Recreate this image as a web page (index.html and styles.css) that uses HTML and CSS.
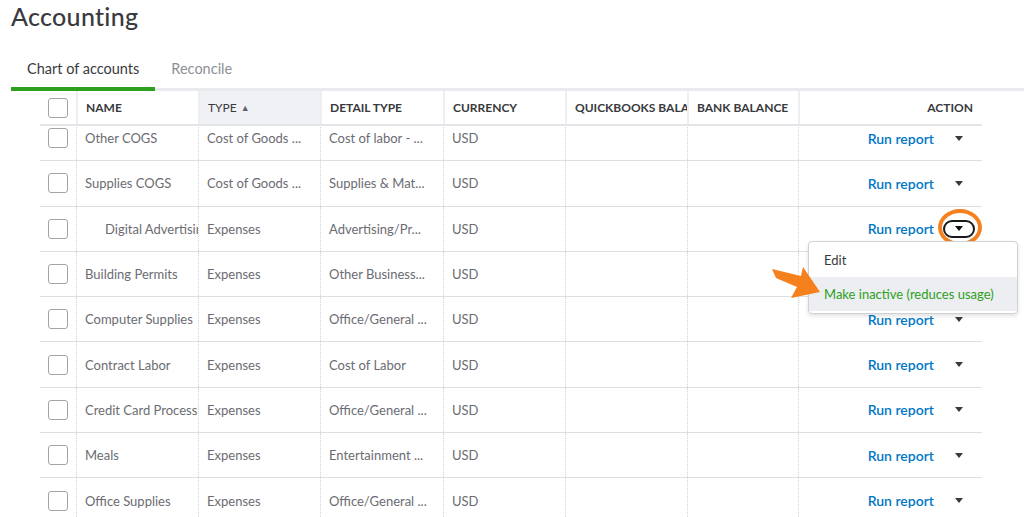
FILE: index.html
```html
<!DOCTYPE html>
<html lang="en">
<head>
    <meta charset="UTF-8">
    <title>Accounting</title>
    <link rel="stylesheet" href="styles.css">
</head>
<body>
    <h1 class="title">Accounting</h1>
    <div class="tabs">
        <div class="tab active">Chart of accounts</div>
        <div class="tab">Reconcile</div>
    </div>

    <div class="table">
        <div class="row head">
            <div class="cell check"><span class="box"></span></div>
            <div class="cell">NAME</div>
            <div class="cell sorted">TYPE <span class="sort">&#9650;</span></div>
            <div class="cell">DETAIL TYPE</div>
            <div class="cell">CURRENCY</div>
            <div class="cell">QUICKBOOKS BALANCE</div>
            <div class="cell">BANK BALANCE</div>
            <div class="cell action">ACTION</div>
        </div>

        <div class="body">
            <div class="body-inner">
                <div class="row">
                    <div class="cell check"><span class="box"></span></div>
                    <div class="cell">Other COGS</div>
                    <div class="cell">Cost of Goods ...</div>
                    <div class="cell">Cost of labor - ...</div>
                    <div class="cell">USD</div>
                    <div class="cell"></div>
                    <div class="cell"></div>
                    <div class="cell action"><a class="run">Run report</a><span class="drop"><span class="tri"></span></span></div>
                </div>
                <div class="row">
                    <div class="cell check"><span class="box"></span></div>
                    <div class="cell">Supplies COGS</div>
                    <div class="cell">Cost of Goods ...</div>
                    <div class="cell">Supplies &amp; Mat...</div>
                    <div class="cell">USD</div>
                    <div class="cell"></div>
                    <div class="cell"></div>
                    <div class="cell action"><a class="run">Run report</a><span class="drop"><span class="tri"></span></span></div>
                </div>
                <div class="row open">
                    <div class="cell check"><span class="box"></span></div>
                    <div class="cell sub">Digital Advertising</div>
                    <div class="cell">Expenses</div>
                    <div class="cell">Advertising/Pr...</div>
                    <div class="cell">USD</div>
                    <div class="cell"></div>
                    <div class="cell"></div>
                    <div class="cell action">
                        <a class="run">Run report</a><span class="drop focus"><span class="tri"></span></span>
                        <span class="ring"></span>
                        <svg class="pointer" width="56" height="40" viewBox="0 0 56 40">
                            <polygon points="5,8 34,15 36,6 53,31 24,37 30,26 9,17" fill="#f5801e"/>
                        </svg>
                        <div class="menu">
                            <div class="item">Edit</div>
                            <div class="item hover">Make inactive (reduces usage)</div>
                        </div>
                    </div>
                </div>
                <div class="row">
                    <div class="cell check"><span class="box"></span></div>
                    <div class="cell">Building Permits</div>
                    <div class="cell">Expenses</div>
                    <div class="cell">Other Business...</div>
                    <div class="cell">USD</div>
                    <div class="cell"></div>
                    <div class="cell"></div>
                    <div class="cell action"><a class="run">Run report</a><span class="drop"><span class="tri"></span></span></div>
                </div>
                <div class="row">
                    <div class="cell check"><span class="box"></span></div>
                    <div class="cell">Computer Supplies</div>
                    <div class="cell">Expenses</div>
                    <div class="cell">Office/General ...</div>
                    <div class="cell">USD</div>
                    <div class="cell"></div>
                    <div class="cell"></div>
                    <div class="cell action"><a class="run">Run report</a><span class="drop"><span class="tri"></span></span></div>
                </div>
                <div class="row">
                    <div class="cell check"><span class="box"></span></div>
                    <div class="cell">Contract Labor</div>
                    <div class="cell">Expenses</div>
                    <div class="cell">Cost of Labor</div>
                    <div class="cell">USD</div>
                    <div class="cell"></div>
                    <div class="cell"></div>
                    <div class="cell action"><a class="run">Run report</a><span class="drop"><span class="tri"></span></span></div>
                </div>
                <div class="row">
                    <div class="cell check"><span class="box"></span></div>
                    <div class="cell">Credit Card Processing</div>
                    <div class="cell">Expenses</div>
                    <div class="cell">Office/General ...</div>
                    <div class="cell">USD</div>
                    <div class="cell"></div>
                    <div class="cell"></div>
                    <div class="cell action"><a class="run">Run report</a><span class="drop"><span class="tri"></span></span></div>
                </div>
                <div class="row">
                    <div class="cell check"><span class="box"></span></div>
                    <div class="cell">Meals</div>
                    <div class="cell">Expenses</div>
                    <div class="cell">Entertainment ...</div>
                    <div class="cell">USD</div>
                    <div class="cell"></div>
                    <div class="cell"></div>
                    <div class="cell action"><a class="run">Run report</a><span class="drop"><span class="tri"></span></span></div>
                </div>
                <div class="row">
                    <div class="cell check"><span class="box"></span></div>
                    <div class="cell">Office Supplies</div>
                    <div class="cell">Expenses</div>
                    <div class="cell">Office/General ...</div>
                    <div class="cell">USD</div>
                    <div class="cell"></div>
                    <div class="cell"></div>
                    <div class="cell action"><a class="run">Run report</a><span class="drop"><span class="tri"></span></span></div>
                </div>
            </div>
        </div>
    </div>
</body>
</html>
```

FILE: styles.css
```css
body {
    margin: 0;
    font-family: Lato, "Open Sans", Arial, sans-serif;
    color: #393a3d;
    background: #fff;
    overflow: hidden;
    height: 517px;
}

.title {
    margin: 0;
    padding: 0 11px;
    font-size: 25px;
    font-weight: 500;
    line-height: 32px;
    letter-spacing: 0.3px;
}

.tabs {
    display: flex;
    margin: 20px 0 0 11px;
    border-bottom: 3px solid #e8eaed;
}

.tab {
    padding: 8px 16px 10px;
    font-size: 14.5px;
    color: #8d9096;
    margin-bottom: -3px;
    border-bottom: 4px solid transparent;
}

.tab.active {
    color: #393a3d;
    border-bottom-color: #2ca01c;
}

.table {
    margin-left: 40px;
    width: 984px;
}

.row {
    display: grid;
    grid-template-columns: 36px 122px 122px 123px 122px 122px 111px 184px;
    width: 942px;
    height: 45.3px;
    border-bottom: 1px solid #dcdee1;
    box-sizing: border-box;
}

.cell {
    display: flex;
    align-items: center;
    padding: 0 8px;
    font-size: 13px;
    color: #6b6c72;
    white-space: nowrap;
    overflow: hidden;
    border-left: 1px dotted #d3d5d9;
}

.cell.check {
    border-left: none;
    padding: 0 0 0 8px;
}

.cell.sub {
    padding-left: 28px;
}

.box {
    width: 18px;
    height: 18px;
    border: 1px solid #a2a4a8;
    border-radius: 3px;
    background: #fff;
}

.row.head {
    height: 35px;
    border-bottom: 2px solid #e3e5e8;
}

.head .cell {
    font-size: 12px;
    font-weight: 700;
    color: #393a3d;
    border-left: 2px solid #eceef1;
}

.head .cell.check {
    border-left: none;
}

.head .cell.sorted {
    background: #eff1f4;
    font-weight: 400;
    color: #393a3d;
}

.sort {
    font-size: 9px;
    margin-left: 4px;
    color: #5d6066;
}

.head .cell.action {
    justify-content: flex-end;
    padding-right: 9px;
}

.body {
    height: 394px;
    overflow: hidden;
}

.body-inner {
    margin-top: -10px;
}

.cell.action {
    justify-content: flex-end;
    padding-right: 7px;
    gap: 9px;
    overflow: visible;
    position: relative;
}

.run {
    color: #0077c5;
    font-weight: 600;
    font-size: 14px;
}

.drop {
    width: 32px;
    height: 18px;
    display: flex;
    align-items: center;
    justify-content: center;
    box-sizing: border-box;
    border: 2px solid transparent;
    border-radius: 10px;
}

.drop.focus {
    border-color: #1a1a1a;
}

.tri {
    width: 0;
    height: 0;
    border-left: 4.5px solid transparent;
    border-right: 4.5px solid transparent;
    border-top: 5px solid #393a3d;
}

.focus .tri {
    border-top-color: #111;
}

.row.open {
    position: relative;
    z-index: 2;
}

.ring {
    position: absolute;
    left: 139px;
    top: 2px;
    width: 36px;
    height: 29px;
    border: 4px solid #f5801e;
    border-radius: 50%;
}

.pointer {
    position: absolute;
    left: -32px;
    top: 54px;
    z-index: 3;
}

.menu {
    position: absolute;
    left: 9px;
    top: 34px;
    width: 210px;
    background: #fff;
    border: 1px solid #cfd1d4;
    border-radius: 4px;
    box-shadow: 0 2px 4px rgba(0, 0, 0, 0.12);
    padding: 1px 0 2px;
    box-sizing: border-box;
}

.item {
    padding: 0 15px;
    height: 34px;
    line-height: 34px;
    font-size: 13px;
    color: #393a3d;
}

.item.hover {
    background: #eceef1;
    color: #2ca01c;
}
```
